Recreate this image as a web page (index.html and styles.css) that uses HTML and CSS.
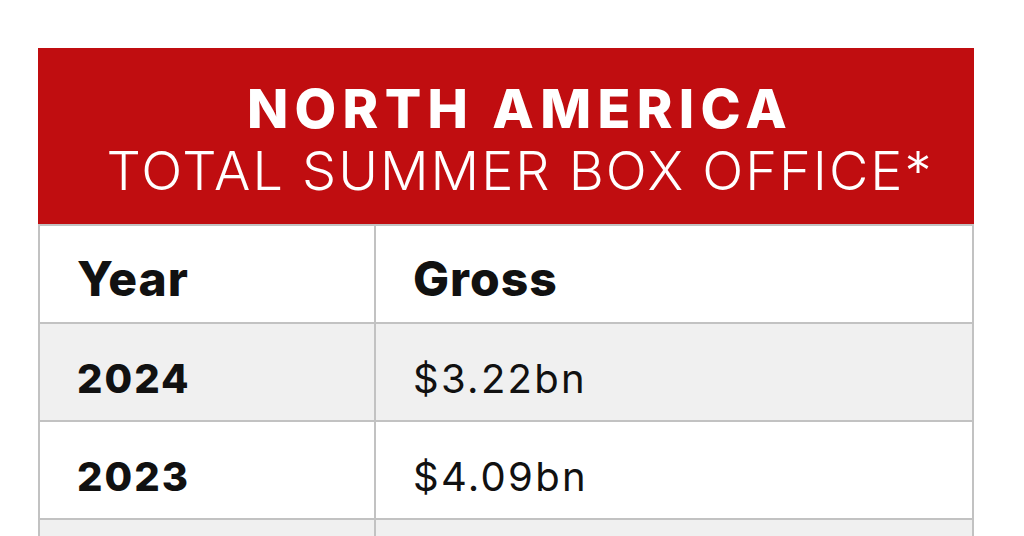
FILE: index.html
```html
<!DOCTYPE html>
<html>
<head>
<meta charset="utf-8">
<link rel="stylesheet" href="styles.css">
</head>
<body>
<div class="card">
  <div class="banner">
    <div class="title">NORTH AMERICA</div>
    <div class="subtitle">TOTAL SUMMER BOX OFFICE*</div>
  </div>
  <div class="row head">
    <div class="cell year">Year</div>
    <div class="cell gross">Gross</div>
  </div>
  <div class="row alt">
    <div class="cell year">2024</div>
    <div class="cell value">$3.22bn</div>
  </div>
  <div class="row">
    <div class="cell year">2023</div>
    <div class="cell value">$4.09bn</div>
  </div>
  <div class="row alt">
    <div class="cell year"></div>
    <div class="cell value"></div>
  </div>
</div>
</body>
</html>
```
FILE: styles.css
```css
html, body {
  margin: 0;
  padding: 0;
  background: #ffffff;
}
body {
  font-family: "Inter", "Lato", "DejaVu Sans", sans-serif;
  color: #111111;
}
.card {
  margin: 48px 0 0 38px;
  width: 936px;
  border-left: 2px solid #c2c2c2;
  border-right: 2px solid #c2c2c2;
  box-sizing: border-box;
}
.banner {
  background: #c00d10;
  height: 176px;
  margin: 0 -2px;
  color: #ffffff;
  text-align: center;
  padding-left: 28px;
  box-sizing: border-box;
  display: flex;
  flex-direction: column;
  align-items: center;
}
.title {
  font-weight: 800;
  font-size: 54px;
  letter-spacing: 6.3px;
  line-height: 56px;
  margin-top: 33px;
}
.subtitle {
  font-weight: 300;
  font-size: 54px;
  letter-spacing: 2px;
  line-height: 60px;
  margin-top: 4px;
}
.row {
  display: grid;
  grid-template-columns: 334px 1fr;
  height: 98px;
  border-top: 2px solid #c2c2c2;
  box-sizing: border-box;
  background: #ffffff;
}
.row.alt {
  background: #f0f0f0;
}
.cell {
  display: flex;
  align-items: center;
  padding-left: 37px;
  padding-top: 12px;
  box-sizing: border-box;
}
.cell + .cell {
  border-left: 2px solid #c2c2c2;
  padding-left: 37px;
}
.head .cell {
  font-size: 48px;
  font-weight: 800;
  letter-spacing: 1px;
  padding-top: 8px;
}
.year {
  font-size: 40px;
  font-weight: 800;
  letter-spacing: 2px;
}
.value {
  font-size: 40px;
  font-weight: 400;
  letter-spacing: 2.3px;
}
```
